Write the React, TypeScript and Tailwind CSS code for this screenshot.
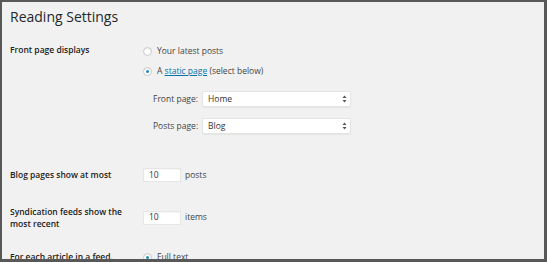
import React from 'react';

const Radio: React.FC<{ checked?: boolean }> = ({ checked }) => (
    <span className="inline-flex h-[9px] w-[9px] shrink-0 items-center justify-center rounded-full border border-[#c8c8c8] bg-white shadow-[inset_0_1px_1px_rgba(0,0,0,0.08)]">
        {checked && <span className="h-[3px] w-[3px] rounded-full bg-[#1e8cbe]" />}
    </span>
);

const SelectBox: React.FC<{ value: string }> = ({ value }) => (
    <div className="flex h-4 w-[149px] items-center justify-between rounded-[2px] border border-[#e4e4e4] bg-white pl-[5px] pr-[3px] text-[#333] shadow-[0_1px_1px_rgba(0,0,0,0.05)]">
        <span>{value}</span>
        <svg width="5" height="8" viewBox="0 0 5 8" className="text-[#555]">
            <path d="M0.5 3 L2.5 0.5 L4.5 3 Z M0.5 5 L2.5 7.5 L4.5 5 Z" fill="currentColor" />
        </svg>
    </div>
);

const NumberInput: React.FC<{ value: string }> = ({ value }) => (
    <div className="flex h-[14px] w-[38px] items-center border border-[#e6e6e6] bg-white pl-[5px] text-[#333] shadow-[inset_0_1px_1px_rgba(0,0,0,0.04)]">
        {value}
    </div>
);

const App: React.FC = () => {
    return (
        <div
            className="h-[262px] w-[547px] overflow-hidden border-t-2 border-l-2 border-r-[3px] border-b-[3px] border-[#585858] bg-[#f1f1f1] text-[8.5px] text-[#444]"
            style={{ fontFamily: '"Open Sans", "Liberation Sans", sans-serif' }}
        >
            <div className="pl-2">
                <h1 className="pt-[5px] text-[14px] leading-[20px] text-[#23282d]">Reading Settings</h1>

                {/* Front page displays */}
                <div className="mt-[17px] flex">
                    <div className="w-[133px] font-semibold leading-[12px] text-[#222]">Front page displays</div>
                    <div className="flex flex-col">
                        <label className="flex h-[14px] items-center gap-[5px]">
                            <Radio />
                            <span>Your latest posts</span>
                        </label>
                        <label className="mt-[6px] flex h-[14px] items-center gap-[5px]">
                            <Radio checked />
                            <span>
                                A <span className="text-[#0073aa] underline">static page</span> (select below)
                            </span>
                        </label>
                        <div className="mt-[13px] flex flex-col gap-[11px] pl-[10px]">
                            <div className="flex items-center gap-[4px] whitespace-nowrap">
                                <span className="w-[45px]">Front page:</span>
                                <SelectBox value="Home" />
                            </div>
                            <div className="flex items-center gap-[4px] whitespace-nowrap">
                                <span className="w-[45px]">Posts page:</span>
                                <SelectBox value="Blog" />
                            </div>
                        </div>
                    </div>
                </div>

                {/* Blog pages */}
                <div className="mt-[34px] flex items-center">
                    <div className="w-[133px] font-semibold leading-[12px] text-[#222]">Blog pages show at most</div>
                    <NumberInput value="10" />
                    <span className="ml-[4px]">posts</span>
                </div>

                {/* Syndication */}
                <div className="mt-[24px] flex items-center">
                    <div className="w-[120px] mr-[13px] font-semibold leading-[11.5px] text-[#222]">
                        Syndication feeds show the most recent
                    </div>
                    <NumberInput value="10" />
                    <span className="ml-[4px]">items</span>
                </div>

                {/* For each article */}
                <div className="mt-[22px] flex">
                    <div className="w-[133px] font-semibold leading-[12px] text-[#222]">For each article in a feed,</div>
                    <label className="flex h-[12px] items-center gap-[5px]">
                        <Radio checked />
                        <span>Full text</span>
                    </label>
                </div>
            </div>
        </div>
    );
};

export default App;
